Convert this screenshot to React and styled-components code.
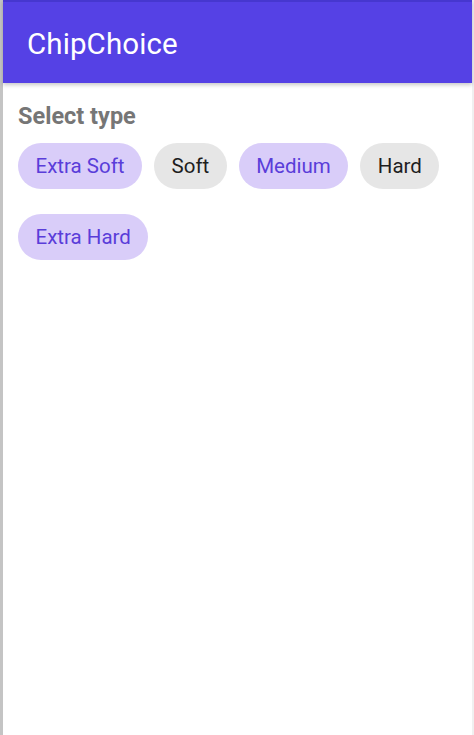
import React, { useState } from 'react';
import styled, { createGlobalStyle } from 'styled-components';

const GlobalStyle = createGlobalStyle`
  html, body {
    margin: 0;
    padding: 0;
    background: #ffffff;
    font-family: Roboto, "Noto Sans", Arial, sans-serif;
  }
`;

const Screen = styled.div`
  width: 474px;
  height: 735px;
  display: flex;
  background: #ffffff;
  overflow: hidden;
`;

// thin grey strip on the left edge of the capture
const EdgeStrip = styled.div`
  width: 3px;
  flex-shrink: 0;
  background: #c4c4c4;
`;

const Phone = styled.div`
  flex: 1;
  display: flex;
  flex-direction: column;
  border-right: 2px solid #f0f0f0;
`;

const Toolbar = styled.header`
  height: 81px;
  border-top: 2px solid #4637cf;
  background: #5541e5;
  display: flex;
  align-items: center;
  padding-left: 24px;
  box-shadow: 0 2px 4px rgba(0, 0, 0, 0.22);
  position: relative;
  z-index: 1;
`;

const Title = styled.h1`
  margin: 0;
  color: #ffffff;
  font-size: 29.5px;
  font-weight: 400;
  letter-spacing: 0.1px;
  padding-top: 2px;
`;

const Content = styled.main`
  padding: 19px 15px;
`;

const Label = styled.div`
  color: #767676;
  font-size: 23.5px;
  font-weight: 700;
  margin-bottom: 13px;
`;

const ChipGroup = styled.div`
  display: flex;
  flex-wrap: wrap;
  column-gap: 12px;
  row-gap: 25px;
`;

const Chip = styled.button`
  height: 46px;
  padding: 0 17.5px;
  border: none;
  border-radius: 23px;
  font-family: inherit;
  font-size: 20.5px;
  font-weight: 400;
  cursor: pointer;
  background: ${(p) => (p.$selected ? '#d9cdf9' : '#e6e6e6')};
  color: ${(p) => (p.$selected ? '#5a3dd9' : '#1e1e1e')};
`;

const types = ['Extra Soft', 'Soft', 'Medium', 'Hard', 'Extra Hard'];

export default function App() {
  const [selected, setSelected] = useState(['Extra Soft', 'Medium', 'Extra Hard']);

  const toggle = (t) =>
    setSelected((s) => (s.includes(t) ? s.filter((x) => x !== t) : [...s, t]));

  return (
    <>
      <GlobalStyle />
      <Screen>
        <EdgeStrip />
        <Phone>
          <Toolbar>
            <Title>ChipChoice</Title>
          </Toolbar>
          <Content>
            <Label>Select type</Label>
            <ChipGroup>
              {types.map((t) => (
                <Chip key={t} $selected={selected.includes(t)} onClick={() => toggle(t)}>
                  {t}
                </Chip>
              ))}
            </ChipGroup>
          </Content>
        </Phone>
      </Screen>
    </>
  );
}
